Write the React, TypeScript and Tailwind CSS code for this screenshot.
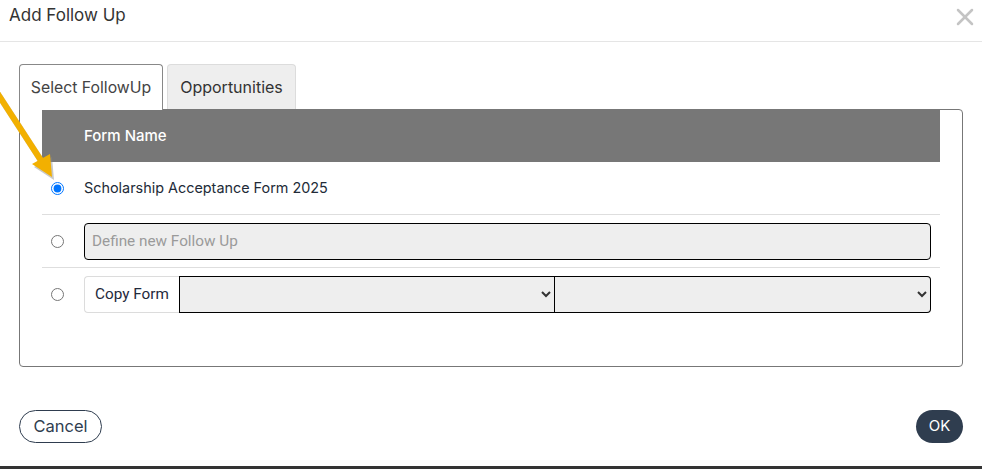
import React, { useState } from 'react';
import { X } from 'lucide-react';

const App: React.FC = () => {
  const [choice, setChoice] = useState<'existing' | 'new' | 'copy'>('existing');

  return (
    <div
      className="relative h-[469px] w-[982px] flex flex-col bg-white text-[#333]"
      style={{ fontFamily: 'Inter, "Open Sans", sans-serif' }}
    >
      {/* Header */}
      <div className="h-[42px] flex items-start justify-between border-b border-[#e5e5e5] pl-[9px] pr-[3px] pt-[3px]">
        <h1 className="text-[17px] leading-[24px] text-[#333]">Add Follow Up</h1>
        <button className="text-[#c4c4c4]">
          <X className="w-[28px] h-[28px]" strokeWidth={2.2} />
        </button>
      </div>

      {/* Body */}
      <div className="px-[19px] pt-[22px]">
        {/* Tabs */}
        <div className="flex items-end gap-[4px]">
          <div className="relative z-10 -mb-px h-[46px] w-[144px] flex items-center justify-center border border-b-0 border-[#888] rounded-t-[4px] bg-white text-[15.8px] text-[#444]">
            Select FollowUp
          </div>
          <div className="h-[45px] w-[129px] flex items-center justify-center border border-b-0 border-[#dcdcdc] rounded-t-[4px] bg-[#eeeeee] text-[16px] text-[#333]">
            Opportunities
          </div>
        </div>

        {/* Panel */}
        <div className="border border-[#777] rounded-b-[4px] rounded-tr-[4px] px-[22px] pb-[45px]">
          <div className="h-[52px] flex items-center bg-[#777777] pl-[42px] text-[15px] font-medium text-white">
            Form Name
          </div>

          <label className="h-[53px] flex items-center border-b border-[#dedede]">
            <div className="w-[42px] pl-[9px] flex items-center">
              <input
                type="radio"
                name="fu"
                checked={choice === 'existing'}
                onChange={() => setChoice('existing')}
                className="w-[13px] h-[13px]"
              />
            </div>
            <span className="text-[14.4px] text-[#222b38]">Scholarship Acceptance Form 2025</span>
          </label>

          <div className="h-[53px] flex items-center border-b border-[#dedede] pr-[9px]">
            <div className="w-[42px] pl-[9px] flex items-center">
              <input
                type="radio"
                name="fu"
                checked={choice === 'new'}
                onChange={() => setChoice('new')}
                className="w-[13px] h-[13px]"
              />
            </div>
            <input
              type="text"
              disabled
              placeholder="Define new Follow Up"
              className="flex-1 h-[37px] border border-black rounded-[4px] bg-[#eeeeee] px-[7px] text-[15.3px] placeholder:text-[#9a9a9a]"
              style={{ fontFamily: 'Roboto, sans-serif' }}
            />
          </div>

          <div className="h-[53px] flex items-center pr-[9px]">
            <div className="w-[42px] pl-[9px] flex items-center">
              <input
                type="radio"
                name="fu"
                checked={choice === 'copy'}
                onChange={() => setChoice('copy')}
                className="w-[13px] h-[13px]"
              />
            </div>
            <div className="flex-1 flex h-[37px]" style={{ fontFamily: 'Roboto, sans-serif' }}>
              <span className="w-[95px] flex items-center justify-center border border-r-0 border-[#dcdcdc] rounded-l-[4px] bg-white text-[15.3px] text-[#1f2a3c]">
                Copy Form
              </span>
              <select className="w-[376px] h-full border border-black bg-[#eeeeee] text-[14px]" disabled>
                <option></option>
              </select>
              <select className="flex-1 h-full border border-l-0 border-black rounded-r-[4px] bg-[#eeeeee] text-[14px]" disabled>
                <option></option>
              </select>
            </div>
          </div>
        </div>
      </div>

      {/* Footer */}
      <div className="flex-1 flex items-start justify-between px-[19px] pt-[43px]">
        <button className="h-[33px] w-[83px] rounded-full border border-[#2f3d4f] text-[16.5px] text-[#2f3d4f]">
          Cancel
        </button>
        <button className="h-[33px] w-[47px] rounded-full bg-[#2f3d4f] text-[15px] text-white">
          OK
        </button>
      </div>
      <div className="h-[3px] bg-[#333]" />

      {/* Pointer arrow */}
      <svg className="absolute left-0 top-[80px]" width="70" height="110" viewBox="0 80 70 110">
        <g transform="translate(2,3)" fill="#8a8a8a" opacity="0.45">
          <line x1="-6" y1="88" x2="42" y2="162" stroke="#8a8a8a" strokeWidth="6" />
          <polygon points="52,177 32,164 50,154" />
        </g>
        <line x1="-6" y1="88" x2="42" y2="162" stroke="#f2b000" strokeWidth="6" />
        <polygon points="52,177 32,164 50,154" fill="#f2b000" />
      </svg>
    </div>
  );
};

export default App;
